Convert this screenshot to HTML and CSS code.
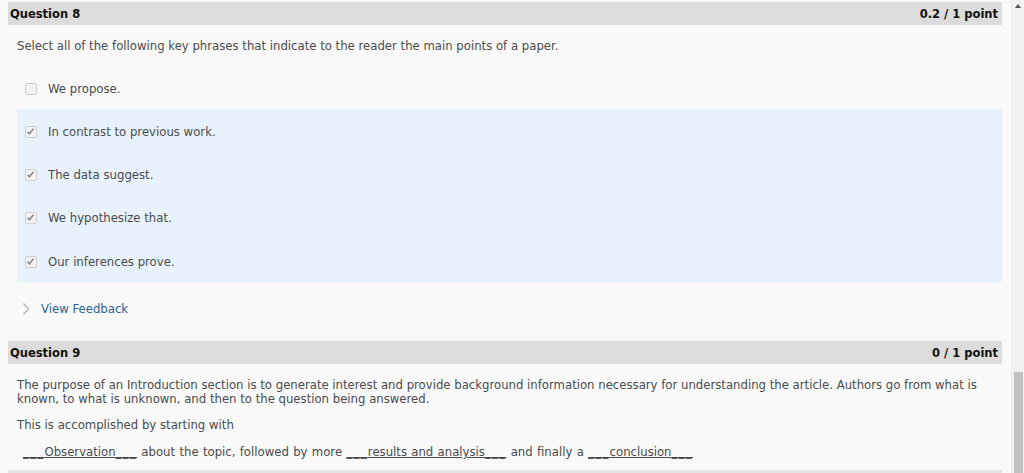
FILE: index.html
```html
<!DOCTYPE html>
<html>
<head>
<meta charset="utf-8">
<link rel="stylesheet" href="styles.css">
</head>
<body>
<div class="window">
  <main class="content">
    <section class="question">
      <header class="q-head"><span>Question 8</span><span>0.2 / 1 point</span></header>
      <p class="q-text">Select all of the following key phrases that indicate to the reader the main points of a paper.</p>
      <div class="options">
        <div class="opt"><span class="box"></span><span>We propose.</span></div>
        <div class="selected">
          <div class="opt"><span class="box checked"><svg viewBox="0 0 11 11" width="11" height="11"><path d="M2.5 5.8 L4.5 7.8 L8.5 2.8" fill="none" stroke="#8a8a8a" stroke-width="1.6"/></svg></span><span>In contrast to previous work.</span></div>
          <div class="opt"><span class="box checked"><svg viewBox="0 0 11 11" width="11" height="11"><path d="M2.5 5.8 L4.5 7.8 L8.5 2.8" fill="none" stroke="#8a8a8a" stroke-width="1.6"/></svg></span><span>The data suggest.</span></div>
          <div class="opt"><span class="box checked"><svg viewBox="0 0 11 11" width="11" height="11"><path d="M2.5 5.8 L4.5 7.8 L8.5 2.8" fill="none" stroke="#8a8a8a" stroke-width="1.6"/></svg></span><span>We hypothesize that.</span></div>
          <div class="opt"><span class="box checked"><svg viewBox="0 0 11 11" width="11" height="11"><path d="M2.5 5.8 L4.5 7.8 L8.5 2.8" fill="none" stroke="#8a8a8a" stroke-width="1.6"/></svg></span><span>Our inferences prove.</span></div>
        </div>
      </div>
      <div class="feedback"><svg class="chev" viewBox="0 0 8 14" width="8" height="14"><path d="M1.5 1.5 L6.5 7 L1.5 12.5" fill="none" stroke="#b5b5b5" stroke-width="1.3"/></svg><a class="fb-link">View Feedback</a></div>
    </section>
    <section class="question q9">
      <header class="q-head"><span>Question 9</span><span>0 / 1 point</span></header>
      <p class="q-para">The purpose of an Introduction section is to generate interest and provide background information necessary for understanding the article. Authors go from what is known, to what is unknown, and then to the question being answered.</p>
      <p class="q-para2">This is accomplished by starting with</p>
      <p class="blanks"><span class="blank"><span class="us">___</span>Observation<span class="us">___</span></span> about the topic, followed by more <span class="blank"><span class="us">___</span>results and analysis<span class="us">___</span></span> and finally a <span class="blank"><span class="us">___</span>conclusion<span class="us">___</span></span></p>
      <div class="end-line"></div>
    </section>
  </main>
  <div class="scrollbar"><div class="arrow"></div><div class="track"></div><div class="thumb"></div></div>
</div>
</body>
</html>
```
FILE: styles.css
```css
html, body { margin: 0; padding: 0; }
body {
  background: #f9f9f9;
  font-family: "DejaVu Sans", Verdana, sans-serif;
  font-size: 11.7px;
  color: #494c4e;
  overflow: hidden;
}
.window { display: flex; width: 1024px; height: 473px; }
.content { width: 995px; padding: 2px 9px 0 8px; }
.scrollbar {
  width: 12px; background: #f1f1f1; display: flex; flex-direction: column;
  border-left: 1px solid #ededed;
}
.arrow {
  width: 0; height: 0; margin: 4px auto 0;
  border-left: 3.5px solid transparent; border-right: 3.5px solid transparent;
  border-bottom: 4px solid #505050;
}
.track { flex: 1; }
.thumb { height: 101px; margin: 0 1px 0 2px; background: #c1c1c1; }
.q-head {
  display: flex; justify-content: space-between; align-items: center;
  height: 23px; background: #dcdcdc; padding: 0 4px 0 2px;
  font-weight: bold; color: #111; font-size: 11.5px;
}
.q-text { margin: 14px 0 0 9px; line-height: 14px; }
.options { margin-top: 13px; }
.opt {
  display: flex; align-items: center; height: 43.25px; padding: 2px 0 0 8px;
  box-sizing: border-box;
}
.box {
  width: 10px; height: 10px; border: 1px solid #cfcfcf; border-radius: 2px;
  background: #f3f3f3; margin-right: 11px; flex: none; display: flex;
  position: relative;
}
.box svg { position: absolute; left: -1px; top: -1px; }
.selected { background: #e8f2fc; margin-left: 9px; }
.options > .opt { margin-left: 9px; }
.feedback { display: flex; align-items: center; height: 20px; margin-top: 17px; padding-left: 14px; }
.chev { margin-right: 11px; }
.fb-link { color: #2b6296; }
.q9 { margin-top: 22px; }
.q-para { margin: 14px 0 0 9px; line-height: 14px; padding-right: 20px; }
.q-para2 { margin: 12px 0 0 9px; line-height: 14px; }
.blanks { margin: 13px 0 0 15px; line-height: 14px; word-spacing: 0.6px; }
.blank { text-decoration: underline; }
.us { letter-spacing: 1.3px; }
.end-line { height: 3px; background: #e3e3e3; margin-top: 11px; }
```
